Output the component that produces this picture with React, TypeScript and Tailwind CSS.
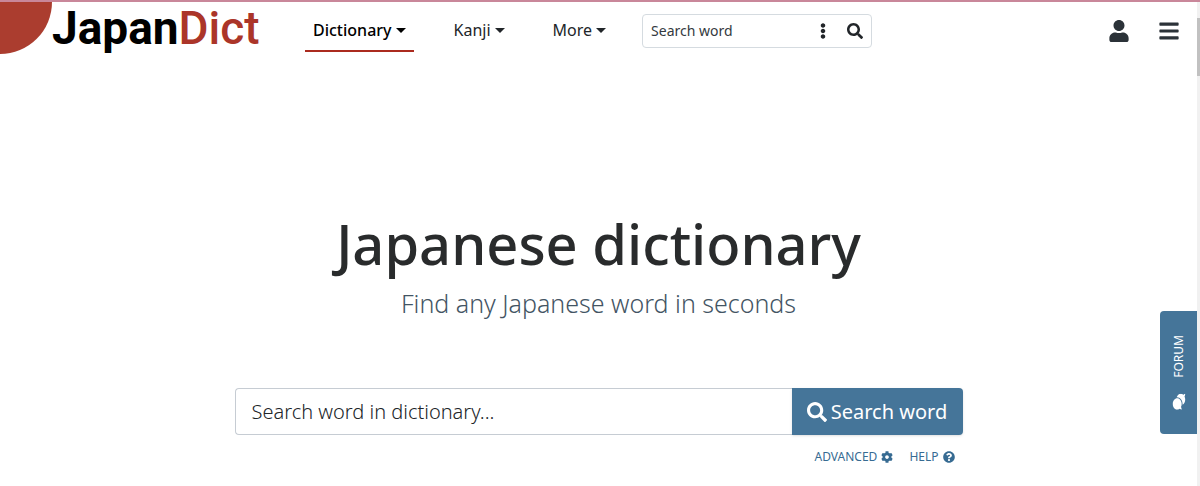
import { useState } from 'react';
import { FaBars, FaCog, FaComments, FaEllipsisV, FaQuestionCircle, FaSearch, FaUser } from 'react-icons/fa';

const MENU = ['Dictionary', 'Kanji', 'More'];

function Logo() {
  return (
    <a href="#" className="flex shrink-0 items-start" aria-label="JapanDict home">
      <span className="size-[52px] rounded-br-full bg-[#ab3d2f]" />
      <span className="w-[221px] font-['Roboto','Noto_Sans',sans-serif] text-[46px] leading-[52px] text-black">
        <span className="font-bold">Japan</span>
        <span className="font-medium text-[#ab3529]">Dict</span>
      </span>
    </a>
  );
}

function Menu() {
  const [active, setActive] = useState('Dictionary');

  return (
    <nav className="mt-2 ml-8 flex items-start gap-8">
      {MENU.map((item) => (
        <button
          key={item}
          type="button"
          onClick={() => setActive(item)}
          className={`flex h-[42px] items-center gap-1 border-b-2 px-2 text-base ${
            item === active ? 'border-[#ab2b1f] font-medium text-black' : 'border-transparent text-[#212529]'
          }`}
        >
          {item}
          <span className="border-x-5 border-t-5 border-x-transparent border-t-current" />
        </button>
      ))}
    </nav>
  );
}

function QuickSearch() {
  return (
    <form
      className="mt-3 ml-7 flex h-[34px] w-[230px] items-center rounded border border-[#d5dbe0] pr-2 text-[#212529]"
      onSubmit={(e) => e.preventDefault()}
    >
      <input
        type="text"
        aria-label="Search word"
        placeholder="Search word"
        className="min-w-0 flex-1 pl-2 text-sm outline-none placeholder:text-[#343a40]"
      />
      <button type="button" aria-label="Search options" className="mr-4">
        <FaEllipsisV className="size-4" />
      </button>
      <button type="submit" aria-label="Search">
        <FaSearch className="size-4" />
      </button>
    </form>
  );
}

function Header() {
  return (
    <header className="flex h-[58px] items-start">
      <Logo />
      <Menu />
      <QuickSearch />
      <div className="mt-[18px] mr-[17px] ml-auto flex items-center gap-7 text-[#2b3238]">
        <button type="button" aria-label="Account">
          <FaUser className="size-[22px]" />
        </button>
        <button type="button" aria-label="Open menu">
          <FaBars className="size-[22px]" />
        </button>
      </div>
    </header>
  );
}

function Hero() {
  return (
    <section className="mx-auto w-full max-w-[728px] pt-[142px]">
      <h1 className="text-center text-[56px] leading-[82px] font-medium text-[#292b2c]">Japanese dictionary</h1>
      <p className="text-center text-[25px] leading-[38px] font-light text-[#435463]">
        Find any Japanese word in seconds
      </p>

      <form className="mt-[66px] flex h-[47px]" onSubmit={(e) => e.preventDefault()}>
        <input
          type="text"
          aria-label="Search word in dictionary"
          placeholder="Search word in dictionary..."
          className="min-w-0 flex-1 rounded-l border border-r-0 border-[#c6ccd3] px-4 text-xl font-light outline-none placeholder:text-[#212529]"
        />
        <button
          type="submit"
          className="flex w-[171px] items-center justify-center gap-1 rounded-r bg-[#457599] text-xl text-white shadow-sm"
        >
          <FaSearch />
          Search word
        </button>
      </form>

      <div className="mt-3 mr-2 flex justify-end gap-4 text-xs leading-5 text-[#376b92]">
        <a href="#advanced" className="flex items-center gap-1">
          ADVANCED <FaCog />
        </a>
        <a href="#help" className="flex items-center gap-1">
          HELP <FaQuestionCircle />
        </a>
      </div>
    </section>
  );
}

export default function App() {
  return (
    <div className="min-h-screen border-t-2 border-[#c9879a] bg-white font-['Noto_Sans','Open_Sans',sans-serif]">
      <div className="relative flex min-h-[calc(100vh-2px)]">
        <main className="min-w-0 flex-1">
          <Header />
          <Hero />
        </main>

        {/* Scroll track */}
        <div className="w-[3px] bg-[#f1f1f1] pt-4">
          <div className="h-[58px] bg-[#c1c1c1]" />
        </div>

        {/* Forum tab, pinned to the right edge */}
        <a
          href="#forum"
          className="absolute top-[309px] right-[3px] flex h-[123px] w-[37px] items-center justify-center rounded-l bg-[#457599] text-xs text-white"
        >
          <span className="flex rotate-180 items-center gap-4 [writing-mode:vertical-rl]">
            <FaComments className="size-4 rotate-90" />
            FORUM
          </span>
        </a>
      </div>
    </div>
  );
}
